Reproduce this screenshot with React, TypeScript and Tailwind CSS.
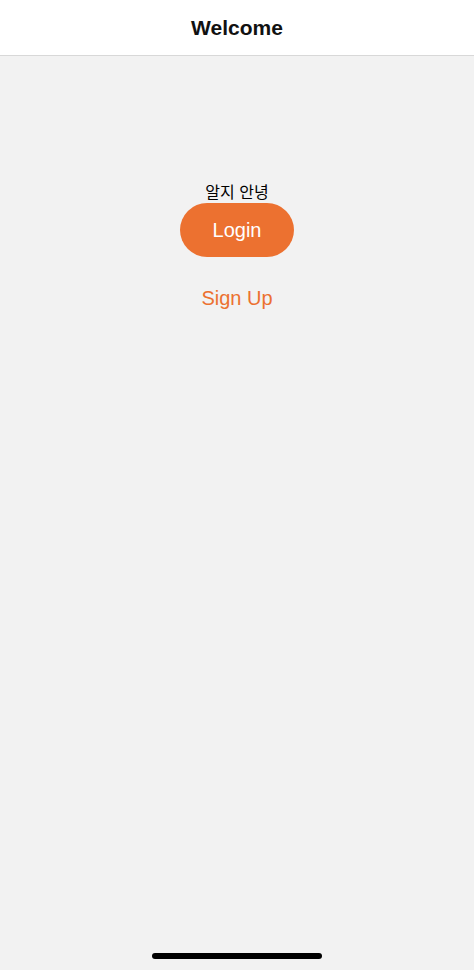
import React from 'react';

const font = { fontFamily: '"Liberation Sans", "Noto Sans CJK KR", sans-serif' };

export default function App() {
  return (
    <div className="flex h-[970px] w-full flex-col bg-[#f2f2f2]" style={font}>
      {/* Header */}
      <header className="flex h-[56px] shrink-0 items-center justify-center border-b border-[#d8d8d8] bg-white">
        <h1 className="text-[21px] font-semibold text-[#111]">Welcome</h1>
      </header>

      {/* Body */}
      <main className="flex flex-1 flex-col items-center pt-[127px]">
        <p className="text-[16px] leading-[20px] text-black">알지 안녕</p>
        <button className="flex h-[54px] w-[114px] items-center justify-center rounded-full bg-[#ec7130] text-[20px] text-white">
          Login
        </button>
        <button className="mt-[27px] text-[20px] leading-[28px] text-[#ec7130]">Sign Up</button>
      </main>

      {/* Home indicator */}
      <div className="flex h-[18px] shrink-0 justify-center pt-[1px]">
        <div className="h-[6px] w-[170px] rounded-full bg-black" />
      </div>
    </div>
  );
}
